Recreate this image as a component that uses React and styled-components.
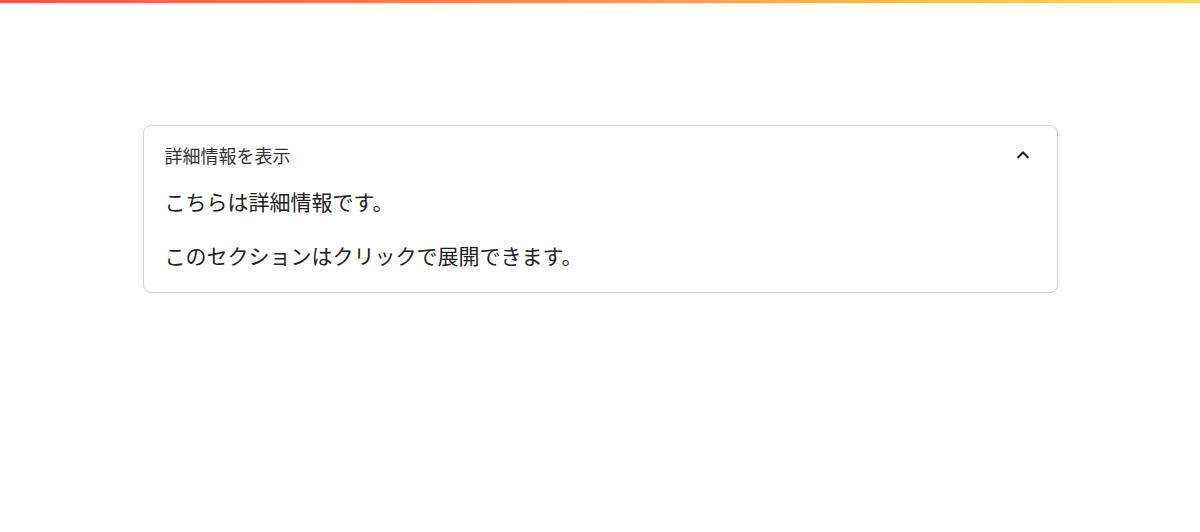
import React, { useState } from "react";
import styled, { createGlobalStyle } from "styled-components";

const GlobalStyle = createGlobalStyle`
  html, body {
    margin: 0;
    padding: 0;
    background: #ffffff;
    font-family: "Noto Sans CJK JP", "Noto Sans", sans-serif;
  }
`;

const TopBar = styled.div`
  height: 3px;
  background: linear-gradient(90deg, #ec5a45 0%, #f48c55 45%, #f9b562 75%, #fbd46c 100%);
`;

const Page = styled.div`
  display: flex;
  justify-content: center;
  padding-top: 122px;
`;

const Card = styled.section`
  width: 915px;
  box-sizing: border-box;
  border: 1px solid #d4d4d4;
  border-radius: 8px;
  padding: 0 21px 22px;
`;

const Header = styled.button`
  display: flex;
  align-items: center;
  justify-content: space-between;
  width: 100%;
  height: 58px;
  padding: 0;
  border: none;
  background: none;
  cursor: pointer;
  font: inherit;
  font-size: 18px;
  color: #333;
  text-align: left;
`;

const Chevron = styled.svg`
  width: 16px;
  height: 16px;
  margin-right: 5px;
  transform: ${(p) => (p.$open ? "none" : "rotate(180deg)")};
`;

const Body = styled.div`
  display: flex;
  flex-direction: column;
  gap: 24px;
  margin-top: 2px;
`;

const Line = styled.p`
  margin: 0;
  font-size: 21px;
  line-height: 30px;
  color: #222;
`;

export default function App() {
  const [open, setOpen] = useState(true);
  return (
    <>
      <GlobalStyle />
      <TopBar />
      <Page>
        <Card>
          <Header onClick={() => setOpen(!open)}>
            詳細情報を表示
            <Chevron $open={open} viewBox="0 0 16 16" fill="none">
              <path d="M2.5 11 L8 5.5 L13.5 11" stroke="#222" strokeWidth="2" />
            </Chevron>
          </Header>
          {open && (
            <Body>
              <Line>こちらは詳細情報です。</Line>
              <Line>このセクションはクリックで展開できます。</Line>
            </Body>
          )}
        </Card>
      </Page>
    </>
  );
}
